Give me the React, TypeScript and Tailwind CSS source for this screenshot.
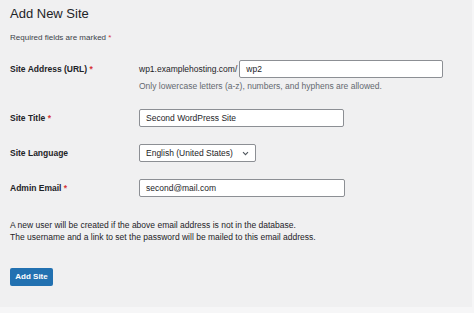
const Req = () => <span className="text-[#d63638]">*</span>;

const Label = ({ children }: { children: React.ReactNode }) => (
  <div className="w-[129px] shrink-0 text-[8.5px] font-bold text-[#1d2327]">{children}</div>
);

export default function App() {
  return (
    <div
      className="w-[474px] h-[313px] bg-[#f0f0f1] overflow-hidden flex flex-col text-[#1d2327] border-r-2 border-[#f6f6f7]"
      style={{ fontFamily: '"Liberation Sans", Arial, sans-serif' }}
    >
      <div className="flex-1 px-[10px] pt-[5px]">
        <h1 className="text-[13px] leading-[18px] font-normal">Add New Site</h1>
        <p className="mt-[9px] text-[8px] leading-[12px] text-[#3c434a]">
          Required fields are marked <Req />
        </p>

        {/* site address */}
        <div className="mt-[16px] flex items-start">
          <div className="h-[18px] flex items-center">
            <Label>
              Site Address (URL) <Req />
            </Label>
          </div>
          <div className="flex flex-col">
            <div className="flex items-center text-[8.5px]">
              <span>wp1.examplehosting.com/</span>
              <div className="ml-[2px] w-[204px] h-[18px] bg-white border border-[#8c8f94] rounded-[2px] flex items-center px-[6px]">
                wp2
              </div>
            </div>
            <p className="mt-[2px] text-[8.5px] leading-[12px] text-[#646970]">
              Only lowercase letters (a-z), numbers, and hyphens are allowed.
            </p>
          </div>
        </div>

        {/* site title */}
        <div className="mt-[17px] flex items-center">
          <Label>
            Site Title <Req />
          </Label>
          <div className="w-[205px] h-[18px] bg-white border border-[#8c8f94] rounded-[2px] flex items-center px-[6px] text-[8.5px]">
            Second WordPress Site
          </div>
        </div>

        {/* language */}
        <div className="mt-[17px] flex items-center">
          <Label>Site Language</Label>
          <div className="w-[117px] h-[18px] bg-white border border-[#8c8f94] rounded-[2px] flex items-center justify-between pl-[6px] pr-[6px] text-[8.5px]">
            <span>English (United States)</span>
            <svg width="7" height="5" viewBox="0 0 7 5" fill="none">
              <path d="M1 1.2 L3.5 3.7 L6 1.2" stroke="#50575e" strokeWidth="1.1" />
            </svg>
          </div>
        </div>

        {/* email */}
        <div className="mt-[17px] flex items-center">
          <Label>
            Admin Email <Req />
          </Label>
          <div className="w-[206px] h-[18px] bg-white border border-[#8c8f94] rounded-[2px] flex items-center px-[6px] text-[8.5px]">
            second@mail.com
          </div>
        </div>

        <div className="mt-[23px] text-[8.5px] leading-[11.5px]">
          <p>A new user will be created if the above email address is not in the database.</p>
          <p>The username and a link to set the password will be mailed to this email address.</p>
        </div>

        <button className="mt-[25px] w-[43px] h-[18px] bg-[#2271b1] rounded-[2px] text-white text-[8px] font-bold flex items-center justify-center">
          Add Site
        </button>
      </div>
      <div className="h-[6px] bg-[#f6f6f7]" />
    </div>
  );
}
